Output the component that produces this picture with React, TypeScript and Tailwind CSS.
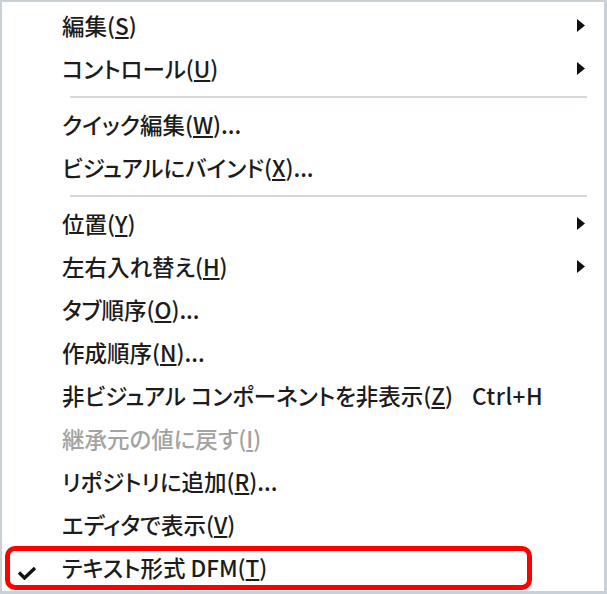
import React from 'react';

type Item =
  | { type: 'sep' }
  | {
      type: 'item';
      label: string;
      key: string;
      dots?: boolean;
      sub?: boolean;
      disabled?: boolean;
      shortcut?: string;
      checked?: boolean;
    };

const items: Item[] = [
  { type: 'item', label: '編集', key: 'S', sub: true },
  { type: 'item', label: 'コントロール', key: 'U', sub: true },
  { type: 'sep' },
  { type: 'item', label: 'クイック編集', key: 'W', dots: true },
  { type: 'item', label: 'ビジュアルにバインド', key: 'X', dots: true },
  { type: 'sep' },
  { type: 'item', label: '位置', key: 'Y', sub: true },
  { type: 'item', label: '左右入れ替え', key: 'H', sub: true },
  { type: 'item', label: 'タブ順序', key: 'O', dots: true },
  { type: 'item', label: '作成順序', key: 'N', dots: true },
  { type: 'item', label: '非ビジュアル コンポーネントを非表示', key: 'Z', shortcut: 'Ctrl+H' },
  { type: 'item', label: '継承元の値に戻す', key: 'I', disabled: true },
  { type: 'item', label: 'リポジトリに追加', key: 'R', dots: true },
  { type: 'item', label: 'エディタで表示', key: 'V' },
  { type: 'item', label: 'テキスト形式 DFM', key: 'T', checked: true },
];

const App = () => {
  return (
    <div
      className="w-[607px] h-[594px] bg-white border-l-2 border-t-2 border-r-[3px] border-b-[3px] border-[#c9d0d6] pt-[2px] flex flex-col text-[22.5px] font-medium [font-feature-settings:'palt'] overflow-hidden"
      style={{ fontFamily: '"Noto Sans CJK JP", "Noto Sans", sans-serif' }}
    >
      {items.map((it, i) =>
        it.type === 'sep' ? (
          <div key={i} className="h-[13px] flex items-center pl-[68px] pr-[17px]">
            <div className="h-[2px] w-full bg-[#d3dade]" />
          </div>
        ) : (
          <div
            key={i}
            className={`relative h-[43px] shrink-0 flex items-center pl-[60px] pr-[19px] leading-none ${
              it.disabled ? 'text-[#a3a3a3]' : 'text-[#1c1c1c]'
            }`}
          >
            {it.checked && (
              <>
                <span className="absolute left-[3px] top-0 w-[527px] h-[44px] border-[5px] border-[#ff0000] rounded-[10px]" />
                <svg className="absolute left-[15px] top-[20px]" width="20" height="14" viewBox="0 0 20 14">
                  <path d="M2 6.5 L7.5 12 L18 2" fill="none" stroke="#111" strokeWidth="3.4" />
                </svg>
              </>
            )}
            <span className={it.shortcut ? 'w-[410px] whitespace-nowrap' : 'whitespace-nowrap'}>
              {it.label}(<span className="underline underline-offset-2">{it.key}</span>){it.dots ? '...' : ''}
            </span>
            {it.shortcut && <span className="tracking-[0.5px]">{it.shortcut}</span>}
            {it.sub && (
              <svg className="ml-auto" width="8" height="13" viewBox="0 0 8 13">
                <path d="M0 0 L8 6.5 L0 13 Z" fill="#111" />
              </svg>
            )}
          </div>
        )
      )}
    </div>
  );
};

export default App;
